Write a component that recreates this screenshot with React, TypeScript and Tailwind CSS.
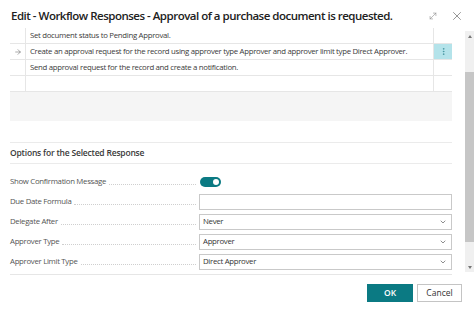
import { ArrowRight, ChevronDown, MoveDiagonal, X, EllipsisVertical } from "lucide-react";

const ROWS = [
  { text: "Set document status to Pending Approval.", current: false },
  {
    text: "Create an approval request for the record using approver type Approver and approver limit type Direct Approver.",
    current: true,
  },
  { text: "Send approval request for the record and create a notification.", current: false },
  { text: "", current: false },
];

const FIELDS = [
  { label: "Due Date Formula", value: "", select: false },
  { label: "Delegate After", value: "Never", select: true },
  { label: "Approver Type", value: "Approver", select: true },
  { label: "Approver Limit Type", value: "Direct Approver", select: true },
];

function Label({ text }: { text: string }) {
  return (
    <div className="flex items-center w-[189px] shrink-0 text-[#555]">
      <span className="whitespace-nowrap">{text}</span>
      <span className="flex-1 ml-[3px] mr-[3px] border-b border-dotted border-[#cfcfcf] translate-y-[2px]" />
    </div>
  );
}

export default function App() {
  return (
    <div
      className="w-[474px] h-[312px] bg-white flex flex-col overflow-hidden text-[#212121]"
      style={{ fontFamily: '"Open Sans", "Noto Sans", sans-serif' }}
    >
      {/* Header */}
      <div className="h-[28px] shrink-0 flex items-center pl-[11px] pr-[10px]">
        <h1 className="text-[11.5px] font-semibold tracking-[-0.5px] whitespace-nowrap flex-1 min-w-0 pt-[3px]">
          Edit - Workflow Responses - Approval of a purchase document is requested.
        </h1>
        <MoveDiagonal size={10} strokeWidth={1.4} className="shrink-0 text-[#8a8a8a] mr-[12px] mt-[3px]" />
        <X size={14} strokeWidth={1.2} className="shrink-0 text-[#6a6a6a] mt-[3px]" />
      </div>

      {/* Body */}
      <div className="flex h-[245px] shrink-0">
        <div className="w-[452px] shrink-0 pl-[10px] flex flex-col">
          {/* Lines grid */}
          <div className="h-[93px] shrink-0 bg-[#f5f5f5] flex flex-col">
            {ROWS.map((row, i) => (
              <div
                key={i}
                className="flex h-[16px] shrink-0 bg-white border-b border-[#e6e6e6] text-[7.8px] tracking-[-0.3px] text-[#3a3a3a]"
              >
                <div className="w-[16px] shrink-0 border-r border-[#e6e6e6] flex items-center justify-center">
                  {row.current && <ArrowRight size={8} strokeWidth={1.5} className="text-[#555]" />}
                </div>
                <div className="flex-1 min-w-0 overflow-hidden flex items-center pl-[4px] whitespace-nowrap">{row.text}</div>
                <div
                  className={`w-[19px] shrink-0 border-l border-[#e6e6e6] flex items-center justify-center ${
                    row.current ? "bg-[#b4e3ea]" : ""
                  }`}
                >
                  {row.current && <EllipsisVertical size={9} strokeWidth={2} className="text-[#3d8f99]" />}
                </div>
              </div>
            ))}
          </div>

          {/* Options section */}
          <div className="mt-[21px] border-t border-[#ebebeb]">
            <div className="h-[21px] border-b border-[#ebebeb] flex items-center text-[8.5px] tracking-[-0.2px] font-semibold text-[#3a3a3a]">
              Options for the Selected Response
            </div>
            <div className="flex flex-col pt-[8px] text-[7.8px] tracking-[-0.3px]">
              <div className="flex items-center h-[20px]">
                <Label text="Show Confirmation Message" />
                <div className="w-[21px] h-[10px] rounded-full bg-[#0b7a83] flex items-center justify-end pr-[2px] ml-[1px]">
                  <div className="w-[6px] h-[6px] rounded-full bg-white" />
                </div>
              </div>
              {FIELDS.map((f) => (
                <div key={f.label} className="flex items-center h-[20px]">
                  <Label text={f.label} />
                  <div className="flex-1 h-[16px] border border-[#c9c9c9] flex items-center pl-[3px] pr-[4px] text-[#333]">
                    <span className="flex-1">{f.value}</span>
                    {f.select && <ChevronDown size={8} strokeWidth={2} className="text-[#555]" />}
                  </div>
                </div>
              ))}
            </div>
            <div className="mt-[2px] border-t border-[#e6e6e6]" />
          </div>
        </div>

        {/* Scrollbar */}
        <div className="ml-[13px] w-[9px] shrink-0 mt-[3px] mb-[1px] bg-[#f0f0f0] flex flex-col items-center">
          <div className="h-[41px] w-full flex justify-center pt-[4px]">
            <div className="w-0 h-0 border-l-[2px] border-r-[2px] border-b-[3px] border-l-transparent border-r-transparent border-b-[#777]" />
          </div>
          <div className="w-full h-[170px] bg-[#c6c6c6]" />
          <div className="flex-1 w-full flex justify-center items-end pb-[3px]">
            <div className="w-0 h-0 border-l-[2px] border-r-[2px] border-t-[3px] border-l-transparent border-r-transparent border-t-[#777]" />
          </div>
        </div>
      </div>

      {/* Footer */}
      <div className="flex justify-end gap-[4px] pr-[12px] pt-[11px]">
        <button className="w-[46px] h-[18px] bg-[#0b7a83] text-white text-[8.5px] font-semibold">OK</button>
        <button className="w-[45px] h-[18px] bg-white border border-[#c4c4c4] text-[#333] text-[8.5px]">Cancel</button>
      </div>
    </div>
  );
}
